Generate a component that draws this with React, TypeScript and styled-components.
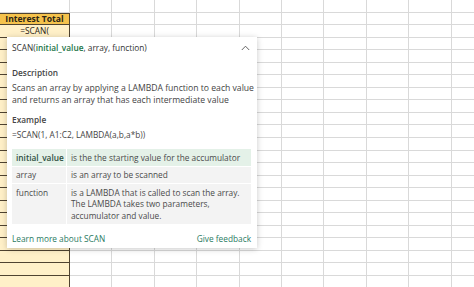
import React from 'react'
import styled, { createGlobalStyle } from 'styled-components'

const GlobalStyle = createGlobalStyle`
  html, body {
    margin: 0;
    padding: 0;
    background: #ffffff;
    overflow: hidden;
  }
`

const Page = styled.div`
  position: relative;
  width: 474px;
  height: 287px;
  overflow: hidden;
  font-family: 'Segoe UI', 'Open Sans', 'Noto Sans', sans-serif;
`

const Sheet = styled.div`
  display: grid;
  grid-template-columns: 70px repeat(10, 42.4px);
  grid-auto-rows: 12.55px;
`

type CellKind = 'plain' | 'header' | 'active' | 'yellow'

const Cell = styled.div<{ $kind: CellKind }>`
  box-sizing: border-box;
  display: flex;
  align-items: center;
  justify-content: center;
  font-family: 'Open Sans', sans-serif;
  font-size: ${(p) => (p.$kind === 'header' ? '8.6px' : '8.4px')};
  color: #2b2414;
  white-space: nowrap;
  overflow: hidden;
  border-right: 1px solid
    ${(p) => (p.$kind === 'plain' ? '#d9d9d9' : '#4f4330')};
  border-bottom: 1px solid
    ${(p) => (p.$kind === 'plain' ? '#d9d9d9' : '#4f4330')};
  background: ${(p) =>
    p.$kind === 'header'
      ? '#f5c24c'
      : p.$kind === 'plain'
        ? '#ffffff'
        : '#fff0c8'};
  font-weight: ${(p) => (p.$kind === 'header' ? 700 : 400)};
  border-top: ${(p) => (p.$kind === 'header' ? '1px solid #4f4330' : 'none')};
`

const Popup = styled.div`
  position: absolute;
  left: 7px;
  top: 37px;
  width: 250px;
  box-sizing: border-box;
  padding: 5px 6px 3px 5px;
  background: #ffffff;
  box-shadow: 0 1px 6px rgba(0, 0, 0, 0.22);
  color: #3c3c3c;
  font-size: 8.3px;
  line-height: 12px;
`

const TitleRow = styled.div`
  display: flex;
  align-items: center;
  justify-content: space-between;
  color: #333333;
  font-size: 8.3px;
`

const Param = styled.span`
  color: #217346;
  font-weight: 600;
`

const SectionHead = styled.div<{ $gap: number }>`
  margin-top: ${(p) => p.$gap}px;
  font-weight: 600;
  color: #454545;
`

const Body = styled.div<{ $wide?: boolean }>`
  margin-top: 3px;
  color: #444444;
  font-size: ${(p) => (p.$wide ? '8.65px' : '8.3px')};
  white-space: nowrap;
`

const ArgTable = styled.div`
  margin-top: 8px;
  display: grid;
  grid-template-columns: 54px 1fr;
  gap: 1px;
  line-height: 11.5px;
`

const ArgCell = styled.div<{ $active?: boolean; $name?: boolean }>`
  padding: 2.5px 4px;
  background: ${(p) => (p.$active ? '#e4f1e8' : '#f3f3f3')};
  font-weight: ${(p) => (p.$active && p.$name ? 600 : 400)};
  color: ${(p) => (p.$active && p.$name ? '#2f4f3f' : '#4a4a4a')};
`

const Footer = styled.div`
  margin-top: 9px;
  display: flex;
  justify-content: space-between;
  color: #2a7a5f;
`

const Chevron = () => (
  <svg width="9" height="6" viewBox="0 0 9 6" style={{ marginRight: 1 }}>
    <polyline
      points="0.8,5 4.5,1.2 8.2,5"
      fill="none"
      stroke="#555"
      strokeWidth="0.9"
    />
  </svg>
)

const args = [
  { name: 'initial_value', desc: ['is the the starting value for the accumulator'], active: true },
  { name: 'array', desc: ['is an array to be scanned'] },
  {
    name: 'function',
    desc: [
      'is a LAMBDA that is called to scan the array.',
      'The LAMBDA takes two parameters,',
      'accumulator and value.',
    ],
  },
]

const ROWS = 23
const COLS = 11

const kindFor = (r: number, c: number): CellKind => {
  if (c !== 0 || r === 0) return 'plain'
  if (r === 1) return 'header'
  if (r === 2) return 'active'
  return 'yellow'
}

const App = (): JSX.Element => (
  <Page>
    <GlobalStyle />
    <Sheet>
      {Array.from({ length: ROWS * COLS }, (_, i) => {
        const r = Math.floor(i / COLS)
        const c = i % COLS
        const kind = kindFor(r, c)
        return (
          <Cell key={i} $kind={kind}>
            {kind === 'header' ? 'Interest Total' : kind === 'active' ? '=SCAN(' : ''}
          </Cell>
        )
      })}
    </Sheet>

    <Popup>
      <TitleRow>
        <span>
          SCAN(<Param>initial_value</Param>, array, function)
        </span>
        <Chevron />
      </TitleRow>

      <SectionHead $gap={13}>Description</SectionHead>
      <Body $wide>
        Scans an array by applying a LAMBDA function to each value
        <br />
        and returns an array that has each intermediate value
      </Body>

      <SectionHead $gap={8}>Example</SectionHead>
      <Body>=SCAN(1, A1:C2, LAMBDA(a,b,a*b))</Body>

      <ArgTable>
        {args.map((a) => (
          <React.Fragment key={a.name}>
            <ArgCell $active={a.active} $name>
              {a.name}
            </ArgCell>
            <ArgCell $active={a.active}>
              {a.desc.map((line, j) => (
                <div key={j}>{line}</div>
              ))}
            </ArgCell>
          </React.Fragment>
        ))}
      </ArgTable>

      <Footer>
        <span>Learn more about SCAN</span>
        <span>Give feedback</span>
      </Footer>
    </Popup>
  </Page>
)

export default App
